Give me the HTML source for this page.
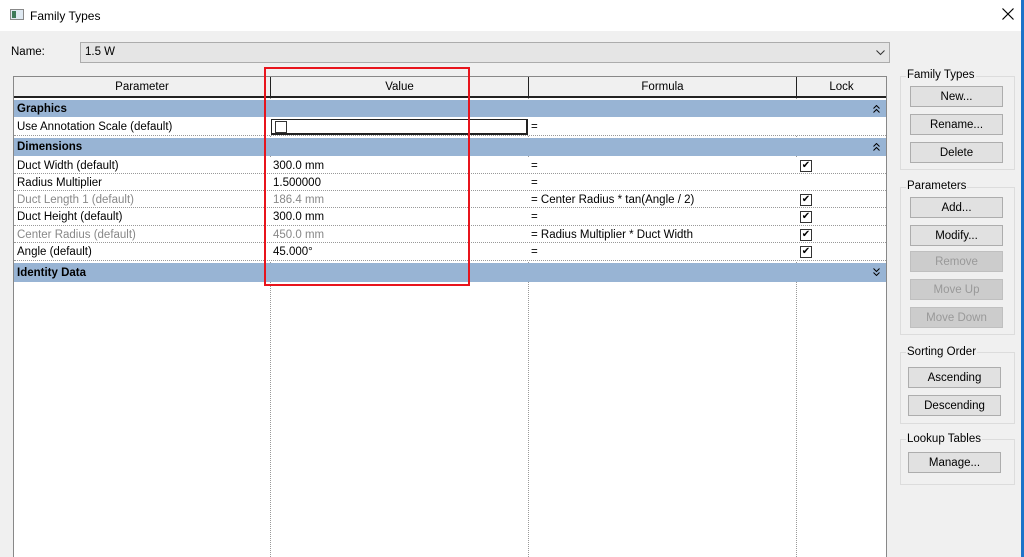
<!DOCTYPE html>
<html><head><style>
*{margin:0;padding:0;box-sizing:border-box}
body{width:1024px;height:557px;overflow:hidden;background:#f0f0f0;font-family:"Liberation Sans",sans-serif;font-size:11.5px;color:#000;position:relative}
.a{position:absolute}
.title{left:0;top:0;width:1024px;height:31px;background:#fff}
.row{position:absolute;left:14px;width:872px;border-bottom:1px dotted #999}
.grp{background:#98b4d4;font-weight:bold;border-bottom:none}
.c{position:absolute;top:1px;white-space:nowrap;line-height:17px}
.gray{color:#888}
.vl{position:absolute;top:98px;bottom:0;border-left:1px dotted #999}
.btn{position:absolute;height:21px;background:#e1e1e1;border:1px solid #adadad;text-align:center;line-height:20px;font-size:11.5px}
.dis{color:#999;background:#ccc;border-color:#bfbfbf}
.box{position:absolute;border:1px solid #dcdcdc;left:900px;width:115px}
.lbl{position:absolute;left:906px;background:#f0f0f0;padding:0 1px;font-size:11.5px}
.cb{position:absolute;left:800px;width:12px;height:12px;border:1px solid #333;background:#fff;font-size:10px;line-height:10px;text-align:center}
.chev{position:absolute;right:6px;top:5px}
</style></head><body>
<div class="a title"></div>
<div class="a" style="left:1021px;top:0;width:3px;height:557px;background:#1c73c9"></div>
<div class="a" style="left:10px;top:9px;width:14px;height:11px;border:1px solid #888;background:#dfe9f2"><div style="margin:1px;width:4px;height:7px;background:#3d7a5a"></div></div>
<div class="a" style="left:30px;top:9px;font-size:12px">Family Types</div>
<svg class="a" style="left:1002px;top:8px" width="12" height="12"><path d="M0.5 0.5L11.5 11.5M11.5 0.5L0.5 11.5" stroke="#000" stroke-width="1.2"/></svg>
<div class="a" style="left:11px;top:46px">Name:</div>
<div class="a" style="left:80px;top:42px;width:810px;height:21px;background:#e5e5e5;border:1px solid #acacac;line-height:19px;padding-left:4px">1.5 W<svg style="position:absolute;right:4px;top:7px" width="9" height="6"><path d="M0.5 0.5L4.5 4.5L8.5 0.5" stroke="#333" fill="none"/></svg></div>

<div class="a" style="left:13px;top:76px;width:874px;height:481px;background:#fff;border:1px solid #888;border-bottom:none"></div>
<div class="a" style="left:14px;top:77px;width:872px;height:21px;background:#f0f0f0;border-bottom:2px solid #222"></div>
<div class="a" style="left:14px;top:78px;width:256px;text-align:center;line-height:19px">Parameter</div>
<div class="a" style="left:270px;top:77px;width:258px;height:19px;text-align:center;line-height:20px;border-left:1px solid #222">Value</div>
<div class="a" style="left:528px;top:77px;width:268px;height:19px;text-align:center;line-height:20px;border-left:1px solid #222">Formula</div>
<div class="a" style="left:796px;top:77px;width:90px;height:19px;text-align:center;line-height:20px;border-left:1px solid #222">Lock</div>

<div class="vl" style="left:270px"></div>
<div class="vl" style="left:528px"></div>
<div class="vl" style="left:796px"></div>

<div class="row grp" style="top:100px;height:17px"><span class="c" style="left:3px">Graphics</span><svg class="chev" width="7" height="8"><path d="M0.5 3.5L3.5 0.5L6.5 3.5M0.5 7.5L3.5 4.5L6.5 7.5" stroke="#000" fill="none"/></svg></div>
<div class="row" style="top:118px;height:18px;background:#fff"><span class="c" style="left:3px">Use Annotation Scale (default)</span>
<div class="a" style="left:257px;top:1px;width:257px;height:16px;border:1px solid #222;border-right-width:2px;border-bottom-width:2px"><div class="a" style="left:3px;top:1px;width:12px;height:12px;border:1px solid #333"></div></div><span class="c" style="left:517px">=</span></div>
<div class="row grp" style="top:138px;height:18px"><span class="c" style="left:3px">Dimensions</span><svg class="chev" width="7" height="8"><path d="M0.5 3.5L3.5 0.5L6.5 3.5M0.5 7.5L3.5 4.5L6.5 7.5" stroke="#000" fill="none"/></svg></div>

<div class="row" style="top:157px;height:17px;background:#fff"><span class="c" style="left:3px">Duct Width (default)</span><span class="c" style="left:259px">300.0 mm</span><span class="c" style="left:517px">=</span><div class="cb" style="left:786px;top:3px">✔</div></div>
<div class="row" style="top:174px;height:17px;background:#fff"><span class="c" style="left:3px">Radius Multiplier</span><span class="c" style="left:259px">1.500000</span><span class="c" style="left:517px">=</span></div>
<div class="row" style="top:191px;height:17px;background:#fff"><span class="c gray" style="left:3px">Duct Length 1 (default)</span><span class="c gray" style="left:259px">186.4 mm</span><span class="c" style="left:517px">= Center Radius * tan(Angle / 2)</span><div class="cb" style="left:786px;top:3px">✔</div></div>
<div class="row" style="top:208px;height:18px;background:#fff"><span class="c" style="left:3px">Duct Height (default)</span><span class="c" style="left:259px">300.0 mm</span><span class="c" style="left:517px">=</span><div class="cb" style="left:786px;top:3px">✔</div></div>
<div class="row" style="top:226px;height:17px;background:#fff"><span class="c gray" style="left:3px">Center Radius (default)</span><span class="c gray" style="left:259px">450.0 mm</span><span class="c" style="left:517px">= Radius Multiplier * Duct Width</span><div class="cb" style="left:786px;top:3px">✔</div></div>
<div class="row" style="top:243px;height:18px;background:#fff"><span class="c" style="left:3px">Angle (default)</span><span class="c" style="left:259px">45.000°</span><span class="c" style="left:517px">=</span><div class="cb" style="left:786px;top:3px">✔</div></div>
<div class="row grp" style="top:263px;height:19px"><span class="c" style="left:3px;line-height:19px">Identity Data</span><svg class="chev" width="7" height="8"><path d="M0.5 0.5L3.5 3.5L6.5 0.5M0.5 4.5L3.5 7.5L6.5 4.5" stroke="#000" fill="none"/></svg></div>

<div class="a" style="left:264px;top:67px;width:206px;height:219px;border:2px solid #e8141c"></div>

<div class="box" style="top:76px;height:94px"></div><div class="lbl" style="top:69px">Family Types</div>
<div class="btn" style="left:910px;top:86px;width:93px">New...</div>
<div class="btn" style="left:910px;top:114px;width:93px">Rename...</div>
<div class="btn" style="left:910px;top:142px;width:93px">Delete</div>
<div class="box" style="top:187px;height:148px"></div><div class="lbl" style="top:180px">Parameters</div>
<div class="btn" style="left:910px;top:197px;width:93px">Add...</div>
<div class="btn" style="left:910px;top:225px;width:93px">Modify...</div>
<div class="btn dis" style="left:910px;top:251px;width:93px">Remove</div>
<div class="btn dis" style="left:910px;top:279px;width:93px">Move Up</div>
<div class="btn dis" style="left:910px;top:307px;width:93px">Move Down</div>
<div class="box" style="top:352px;height:72px"></div><div class="lbl" style="top:346px">Sorting Order</div>
<div class="btn" style="left:908px;top:367px;width:93px">Ascending</div>
<div class="btn" style="left:908px;top:395px;width:93px">Descending</div>
<div class="box" style="top:439px;height:46px"></div><div class="lbl" style="top:433px">Lookup Tables</div>
<div class="btn" style="left:908px;top:452px;width:93px">Manage...</div>
</body></html>
